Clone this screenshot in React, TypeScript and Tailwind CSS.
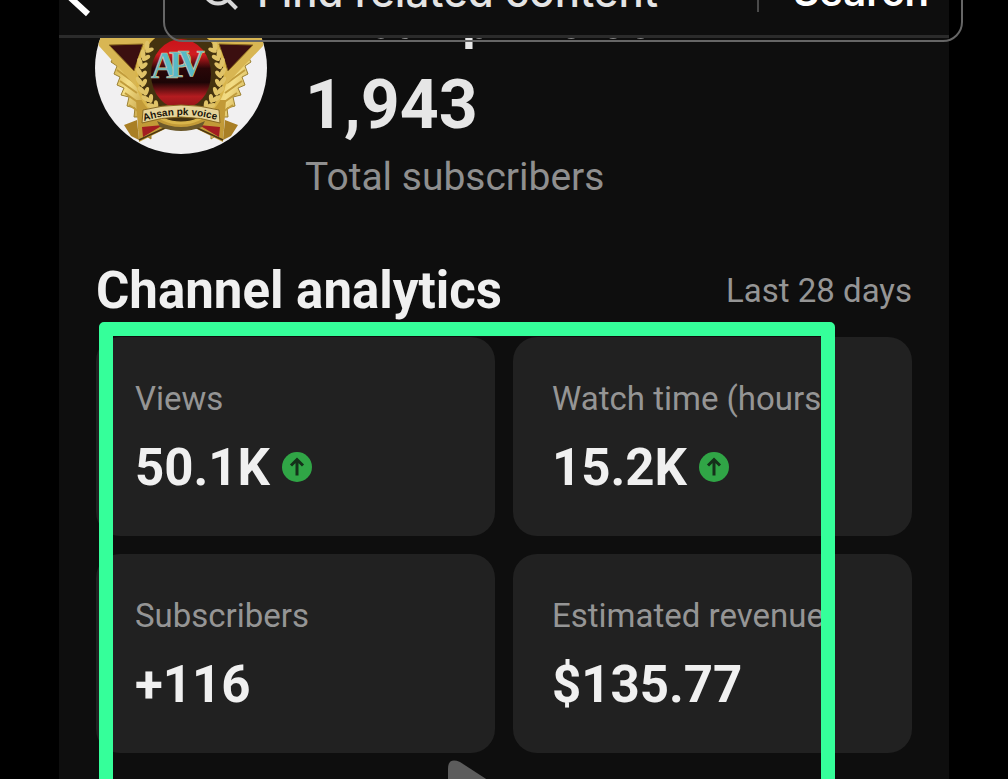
import React from 'react';

interface Metric {
  label: string;
  value: string;
  trend?: 'up';
}

const metrics: Metric[] = [
  { label: 'Views', value: '50.1K', trend: 'up' },
  { label: 'Watch time (hours)', value: '15.2K', trend: 'up' },
  { label: 'Subscribers', value: '+116' },
  { label: 'Estimated revenue', value: '$135.77' },
];

const TrendUp: React.FC = () => (
  <svg viewBox="0 0 32 32" className="size-8" role="img" aria-label="Up">
    <circle cx="16" cy="15" r="15" fill="#30a546" />
    <path d="M16 23.500V8M10 13.500l6-6 6 6" fill="none" stroke="#15301a" strokeWidth="3" />
  </svg>
);

// gold leaves running down both sides of the badge
const leaves = [
  [54, 64, 35], [50, 72, 25], [47, 80, 15], [46, 89, 5], [46, 98, -5], [48, 107, -15], [52, 115, -28], [57, 122, -40],
];

const ChannelBadge: React.FC = () => (
  <svg viewBox="0 0 172 172" className="size-[172px] shrink-0" role="img" aria-label="Channel logo">
    <defs>
      <clipPath id="round">
        <circle cx="86" cy="86" r="86" />
      </clipPath>
      <linearGradient id="gold" x1="0" y1="0" x2="1" y2="1">
        <stop offset="0" stopColor="#c49a2e" />
        <stop offset="0.45" stopColor="#f3dd85" />
        <stop offset="1" stopColor="#a87c1e" />
      </linearGradient>
      <linearGradient id="core" x1="0" y1="0" x2="0" y2="1">
        <stop offset="0" stopColor="#c8141a" />
        <stop offset="0.22" stopColor="#d11c20" />
        <stop offset="0.42" stopColor="#2a0708" />
        <stop offset="0.62" stopColor="#1c0506" />
        <stop offset="0.82" stopColor="#b41c20" />
        <stop offset="1" stopColor="#8f1418" />
      </linearGradient>
    </defs>
    <g clipPath="url(#round)">
      <rect width="172" height="172" fill="#f1f0f1" />
      {/* wings */}
      <path
        d="M12 66l7 8-3 6 6 4-3 8 6 3-3 8 7 3-3 7 8 2-2 9 8 2-1 9 9 0-4 14 12 8V62z"
        fill="url(#gold)" stroke="#9b8032" strokeWidth="1"
      />
      <path
        d="M160 66l-7 8 3 6-6 4 3 8-6 3 3 8-7 3 3 7-8 2 2 9-8 2 1 9-9 0 4 14-12 8V62z"
        fill="url(#gold)" stroke="#9b8032" strokeWidth="1"
      />
      <path
        d="M20 77l18 14M22 88l18 13M25 99l17 12M30 111l14 10M34 123l12 8M152 77l-18 14M150 88l-18 13M147 99l-17 12M142 111l-14 10M138 123l-12 8"
        stroke="#c19c3c" strokeWidth="2"
      />
      {/* star arms */}
      <path d="M0 50H172L168 64 126 108 86 60 44 108 4 64z" fill="#d8b653" />
      <path d="M14 63l34-1-9 27z" fill="#3b0f10" stroke="#8b6a20" />
      <path d="M158 63l-34-1 9 27z" fill="#3b0f10" stroke="#8b6a20" />
      {/* legs of the star under the ribbon */}
      <path d="M41 118l3 42 28-14h28l28 14 3-42z" fill="#c29a37" />
      <path d="M29 143l13-5 2 20-8-4zM143 143l-13-5-2 20 8-4z" fill="#a97f25" />
      <path d="M47 145l21-2-20 12zM125 145l-21-2 20 12z" fill="#a31d20" />
      <path d="M44 158l28-13M128 158l-28-13" stroke="#4b3612" strokeWidth="1.5" />
      <ellipse cx="86" cy="93" rx="44" ry="48" fill="#44320f" stroke="#d9b54b" strokeWidth="3" />
      {leaves.map(([x, y, angle]) => (
        <g key={y} fill="#e0c368">
          <ellipse cx={x - 2} cy={y} rx="2.4" ry="5" transform={`rotate(${angle - 30} ${x} ${y})`} />
          <ellipse cx={x + 4} cy={y + 1} rx="2.2" ry="4.5" transform={`rotate(${angle + 35} ${x} ${y})`} />
          <ellipse cx={174 - x} cy={y} rx="2.4" ry="5" transform={`rotate(${30 - angle} ${172 - x} ${y})`} />
          <ellipse cx={168 - x} cy={y + 1} rx="2.2" ry="4.5" transform={`rotate(${-35 - angle} ${172 - x} ${y})`} />
        </g>
      ))}
      <ellipse cx="86" cy="92" rx="30" ry="35" fill="url(#core)" />
      <g fill="#58b9c6" stroke="#d8c79a" strokeWidth="0.7" fontFamily="Liberation Serif, serif" fontSize="37" fontWeight="700">
        <text x="56" y="96">A</text>
        <text x="74" y="95">P</text>
        <text x="83" y="94">V</text>
      </g>
      {/* name ribbon */}
      <path d="M62 139q24 12 48 0l-3 6q-21 8-42 0z" fill="#6c592b" />
      <path d="M48 128q38-10 76 0l1 13q-39-12-78 0z" fill="#e6d49a" stroke="#8a6a22" />
      <path id="ribbon" d="M49 139q37-12 76 0" fill="none" />
      <text fontFamily="Liberation Sans, sans-serif" fontSize="10" fontWeight="700" fill="#1a1408">
        <textPath href="#ribbon">Ahsan pk voice</textPath>
      </text>
    </g>
  </svg>
);

const MetricCard: React.FC<{ metric: Metric }> = ({ metric }) => (
  <div className="rounded-[24px] bg-[#212121] pt-[42px] pb-[38px] pl-[39px]">
    <dt className="text-[33px] leading-10 whitespace-nowrap text-[#959595]">{metric.label}</dt>
    <dd className="mt-[19px] flex items-center gap-[11px] text-[51px] leading-[60px] font-bold text-[#f0f0f0]">
      {metric.value}
      {metric.trend === 'up' && <TrendUp />}
    </dd>
  </div>
);

const App: React.FC = () => {
  return (
    <div className="h-screen overflow-hidden bg-black px-[59px] font-[Roboto,sans-serif]">
      <main className="min-h-screen bg-[#0e0e0e]">
        {/* top bar, partly scrolled out of view */}
        <header className="relative z-10 -mt-[62px] flex h-[100px] border-b-[3px] border-[#2b2b2b] bg-[#0e0e0e] font-[Inter,sans-serif]">
          <button type="button" aria-label="Back" className="w-[104px] shrink-0">
            <svg viewBox="0 0 104 100" className="h-[100px] w-[104px]" fill="none" stroke="#fff" strokeWidth="6">
              <path d="M29 30L4 53 29 76" />
            </svg>
          </button>
          <form
            role="search"
            onSubmit={e => e.preventDefault()}
            className="-mr-[14px] mt-1 flex h-[100px] min-w-0 flex-1 items-center rounded-[20px] border-2 border-[#666] pr-8 pl-9"
          >
            <svg viewBox="0 0 40 40" className="size-10 shrink-0" fill="none" stroke="#d8d8d8" strokeWidth="4">
              <circle cx="17" cy="18" r="13.500" />
              <path d="M26 27l9.500 9.500" />
            </svg>
            <input
              type="search"
              aria-label="Find related content"
              placeholder="Find related content"
              className="ml-4 min-w-0 flex-1 bg-transparent text-[42px] leading-[48px] font-medium outline-none placeholder:text-[#e4e4e4]"
            />
            <span className="h-10 w-[2px] bg-[#4a4a4a]" />
            <button type="submit" className="ml-[34px] text-[40px] leading-[48px] font-semibold text-white">
              Search
            </button>
          </form>
        </header>

        <section className="-mt-14 flex pl-9">
          <ChannelBadge />
          <div className="ml-[38px] pt-[9px]">
            <h1 className="text-[51px] leading-[60px] font-bold text-[#e6e6e6]">Ahsan pk voice</h1>
            <p className="mt-[14px] text-[68px] leading-[80px] font-bold text-[#e6e6e6]">1,943</p>
            <p className="mt-2 text-[39px] leading-[48px] text-[#8f8f8f]">Total subscribers</p>
          </div>
        </section>

        <section className="mt-[60px] px-[37px]">
          <div className="flex items-center justify-between">
            <h2 className="text-[51px] leading-[60px] font-bold text-[#f0f0f0]">Channel analytics</h2>
            <span className="text-[33px] leading-10 text-[#959595]">Last 28 days</span>
          </div>
          <div className="relative mt-4">
            <dl className="grid grid-cols-2 gap-[18px]">
              {metrics.map(metric => (
                <MetricCard key={metric.label} metric={metric} />
              ))}
            </dl>
            {/* green highlight frame */}
            <div className="pointer-events-none absolute -top-[15px] right-[77px] -bottom-24 left-[3px] rounded-[5px] border-[14px] border-[#35ff9a]" />
          </div>
        </section>

        <div className="mt-[6px] flex justify-center">
          <button type="button" aria-label="Play">
            <svg viewBox="0 0 112 140" className="h-[140px] w-28">
              <path d="M0 10Q0 -2 12 3L106 64Q112 70 106 76L12 137Q0 142 0 130z" fill="#5c5c5c" />
            </svg>
          </button>
        </div>
      </main>
    </div>
  );
};

export default App;
